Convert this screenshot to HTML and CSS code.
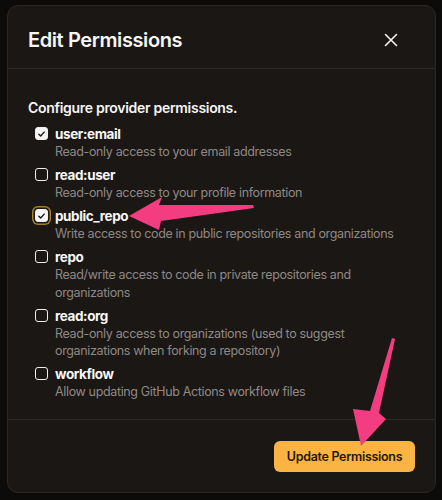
FILE: index.html
```html
<!DOCTYPE html>
<html>
<head>
<meta charset="utf-8">
<link rel="stylesheet" href="styles.css">
</head>
<body>
<div class="modal">
  <div class="header">
    <h1 class="title">Edit Permissions</h1>
    <button class="close" aria-label="Close">
      <svg width="14" height="14" viewBox="0 0 14 14"><path d="M1.5 1.5 L12.5 12.5 M12.5 1.5 L1.5 12.5" stroke="#f5f5f4" stroke-width="1.6" stroke-linecap="round"/></svg>
    </button>
  </div>
  <div class="body">
    <p class="lead">Configure provider permissions.</p>
    <ul class="perms">
      <li class="perm">
        <span class="box checked"><svg viewBox="0 0 14 14"><path d="M3.6 7.2 L6 9.6 L10.4 4.6" fill="none" stroke="#1c1917" stroke-width="1.8" stroke-linecap="round" stroke-linejoin="round"/></svg></span>
        <div class="txt"><div class="name">user:email</div><div class="desc">Read-only access to your email addresses</div></div>
      </li>
      <li class="perm">
        <span class="box"></span>
        <div class="txt"><div class="name">read:user</div><div class="desc">Read-only access to your profile information</div></div>
      </li>
      <li class="perm">
        <span class="box checked focus"><svg viewBox="0 0 14 14"><path d="M3.6 7.2 L6 9.6 L10.4 4.6" fill="none" stroke="#1c1917" stroke-width="1.8" stroke-linecap="round" stroke-linejoin="round"/></svg></span>
        <div class="txt"><div class="name">public_repo</div><div class="desc">Write access to code in public repositories and organizations</div></div>
      </li>
      <li class="perm">
        <span class="box"></span>
        <div class="txt"><div class="name">repo</div><div class="desc">Read/write access to code in private repositories and<br>organizations</div></div>
      </li>
      <li class="perm">
        <span class="box"></span>
        <div class="txt"><div class="name">read:org</div><div class="desc">Read-only access to organizations (used to suggest<br>organizations when forking a repository)</div></div>
      </li>
      <li class="perm">
        <span class="box"></span>
        <div class="txt"><div class="name">workflow</div><div class="desc">Allow updating GitHub Actions workflow files</div></div>
      </li>
    </ul>
  </div>
  <div class="footer">
    <button class="primary">Update Permissions</button>
  </div>
</div>
<svg class="arrows" width="442" height="500" viewBox="0 0 442 500">
  <polygon fill="#f43c80" points="129,216 162,197 159,205 253,205 254,208 161,221 159,230"/>
  <polygon fill="#f43c80" points="392,338 395,339 379,413 386,419 361,446 353,409 370,411"/>
</svg>
</body>
</html>
```
FILE: styles.css
```css
html, body {
  margin: 0;
  padding: 0;
}
body {
  background: #0d0b0a;
  width: 442px;
  height: 500px;
  overflow: hidden;
  font-family: Inter, "Noto Sans", "Liberation Sans", sans-serif;
  color: #f5f5f4;
  position: relative;
}
.modal {
  margin: 5px 0 0 7px;
  width: 429px;
  height: 488px;
  box-sizing: border-box;
  background: #1b1715;
  border: 1px solid #2c2724;
  border-radius: 11px;
  display: flex;
  flex-direction: column;
}
.header {
  height: 63px;
  box-sizing: border-box;
  display: flex;
  align-items: center;
  justify-content: space-between;
  padding: 6px 37px 0 20px;
  border-bottom: 1px solid #2e2a27;
  flex: none;
}
.title {
  margin: 0;
  font-size: 20px;
  font-weight: 600;
  letter-spacing: -0.4px;
  color: #f7f7f6;
}
.close {
  background: none;
  border: 0;
  padding: 0;
  width: 14px;
  height: 14px;
  display: flex;
}
.body {
  flex: 1;
  padding: 29px 20px 0 20px;
  border-bottom: 1px solid #2e2a27;
}
.lead {
  margin: 0 0 7px 0;
  font-size: 14px;
  font-weight: 600;
  line-height: 20px;
  letter-spacing: -0.3px;
  color: #f5f5f4;
}
.perms {
  list-style: none;
  margin: 0;
  padding: 0 0 0 7px;
  display: flex;
  flex-direction: column;
  gap: 5.5px;
}
.perm {
  display: flex;
  align-items: flex-start;
  gap: 7px;
}
.box {
  flex: none;
  width: 13px;
  height: 13px;
  margin-top: 2px;
  border: 1.5px solid #f0efee;
  border-radius: 3px;
  box-sizing: border-box;
  display: flex;
  align-items: center;
  justify-content: center;
}
.box.checked {
  background: #f5f5f4;
}
.box svg {
  width: 12px;
  height: 12px;
}
.box.focus {
  box-shadow: 0 0 0 1.5px #1b1715, 0 0 0 3px #a87a2c;
}
.txt {
  display: flex;
  flex-direction: column;
}
.name {
  font-size: 13.5px;
  font-weight: 700;
  line-height: 18px;
  letter-spacing: -0.4px;
  color: #f7f7f6;
}
.desc {
  font-size: 12.5px;
  line-height: 17.5px;
  letter-spacing: -0.35px;
  color: #8e8984;
}
.footer {
  height: 72px;
  flex: none;
  display: flex;
  align-items: center;
  justify-content: flex-end;
  padding: 0 20px;
}
.primary {
  width: 141px;
  height: 31px;
  background: #fbb443;
  border: 0;
  border-radius: 6px;
  font-family: Inter, "Noto Sans", "Liberation Sans", sans-serif;
  font-size: 12.5px;
  font-weight: 600;
  letter-spacing: -0.3px;
  color: #261705;
  padding: 0;
}
.arrows {
  position: absolute;
  left: 0;
  top: 0;
  pointer-events: none;
}
```
